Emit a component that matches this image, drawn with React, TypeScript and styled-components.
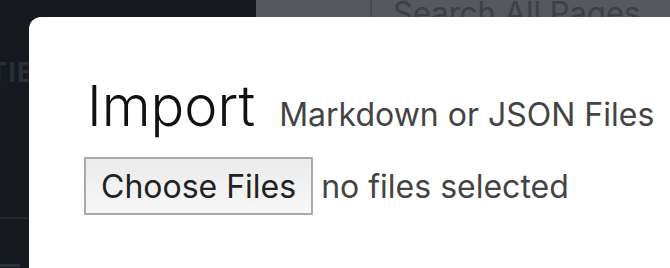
import styled, { createGlobalStyle } from 'styled-components';

const Global = createGlobalStyle`
  html, body {
    margin: 0;
    padding: 0;
    width: 670px;
    height: 268px;
    overflow: hidden;
    background: #161a1f;
    font-family: Inter, "Noto Sans", sans-serif;
  }
`;

const Page = styled.div`
  position: relative;
  width: 670px;
  height: 268px;
  display: grid;
  grid-template-columns: 256px 1fr;
  overflow: hidden;
`;

const Sidebar = styled.div`
  background: #161a1f;
  display: flex;
  flex-direction: column;
  padding-top: 56px;
  overflow: hidden;
`;

const SectionLabel = styled.div`
  font-size: 27px;
  font-weight: 700;
  line-height: 33px;
  color: #2a3038;
  letter-spacing: 1px;
  margin-left: -109px;
  white-space: nowrap;
`;

const Divider = styled.div`
  height: 2px;
  background: #232a32;
  margin-top: 128px;
`;

const FooterTab = styled.div`
  width: 20px;
  height: 3px;
  background: #2b3139;
  margin-top: 45px;
`;

const Main = styled.div`
  background: #fff;
`;

const Header = styled.div`
  height: 17px;
  background: #55585c;
  display: flex;
  overflow: hidden;
`;

const HeaderSep = styled.div`
  width: 114px;
  border-right: 2px solid #47494d;
`;

const SearchText = styled.div`
  font-size: 31px;
  line-height: 1;
  color: #3d4044;
  margin-top: -3px;
  padding-left: 21px;
  white-space: nowrap;
`;

const Modal = styled.div`
  position: absolute;
  left: 29px;
  top: 17px;
  right: -20px;
  bottom: -20px;
  background: #fff;
  border-radius: 12px;
  padding: 61px 0 0 55px;
  display: flex;
  flex-direction: column;
  gap: 23px;
`;

const TitleRow = styled.div`
  display: flex;
  align-items: baseline;
  gap: 24px;
`;

const Title = styled.h1`
  margin: 0 0 0 3px;
  font-size: 56px;
  font-weight: 300;
  line-height: 1;
  color: #111;
`;

const Subtitle = styled.span`
  font-size: 32px;
  line-height: 1;
  color: #444;
`;

const FileRow = styled.div`
  display: flex;
  align-items: center;
  gap: 8px;
`;

const ChooseButton = styled.button`
  font-family: inherit;
  font-size: 32px;
  color: #222;
  height: 58px;
  padding: 0 15px;
  border: 2px solid #aaa;
  background: linear-gradient(#ebebeb, #f7f7f7);
  border-radius: 0;
`;

const FileStatus = styled.span`
  font-size: 32px;
  color: #444;
`;

export default function App() {
  return (
    <>
      <Global />
      <Page>
        <Sidebar>
          <SectionLabel>ACTIVITIES</SectionLabel>
          <Divider />
          <FooterTab />
        </Sidebar>
        <Main>
          <Header>
            <HeaderSep />
            <SearchText>Search All Pages</SearchText>
          </Header>
        </Main>
        <Modal>
          <TitleRow>
            <Title>Import</Title>
            <Subtitle>Markdown or JSON Files</Subtitle>
          </TitleRow>
          <FileRow>
            <ChooseButton>Choose Files</ChooseButton>
            <FileStatus>no files selected</FileStatus>
          </FileRow>
        </Modal>
      </Page>
    </>
  );
}
